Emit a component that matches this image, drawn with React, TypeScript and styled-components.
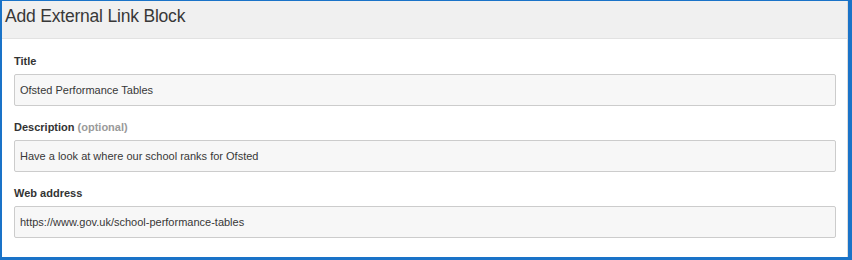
import styled, { createGlobalStyle } from "styled-components";

const GlobalStyle = createGlobalStyle`
  html, body {
    margin: 0;
    padding: 0;
    background: #ffffff;
  }
  body {
    font-family: "Liberation Sans", Arial, sans-serif;
    color: #333333;
  }
`;

const Frame = styled.div`
  width: 852px;
  height: 260px;
  box-sizing: border-box;
  border-style: solid;
  border-color: #1a73c8;
  border-width: 1px 4px 3px 2px;
  background: #ffffff;
  display: flex;
`;

const Panel = styled.div`
  flex: 1;
  display: flex;
  flex-direction: column;
  border-right: 1px solid #dcdcdc;
`;

const Header = styled.div`
  height: 38px;
  box-sizing: border-box;
  background: #f0f0f0;
  border-bottom: 1px solid #e2e2e2;
  padding: 4px 3px 0;
  font-size: 17.5px;
  letter-spacing: -0.2px;
  line-height: 22px;
  color: #383838;
`;

const Body = styled.div`
  padding: 15px 11px 0 12px;
  display: flex;
  flex-direction: column;
  gap: 14px;
`;

const Group = styled.div`
  display: flex;
  flex-direction: column;
`;

const Label = styled.label`
  display: block;
  font-size: 11px;
  line-height: 15px;
  font-weight: bold;
  color: #333333;
  margin-bottom: 5px;
`;

const Hint = styled.span`
  color: #9a9a9a;
`;

const Input = styled.input`
  height: 32px;
  box-sizing: border-box;
  width: 100%;
  margin: 0;
  padding: 0 5px;
  border: 1px solid #cccccc;
  border-radius: 2px;
  background: #f7f7f7;
  font-family: "Liberation Sans", Arial, sans-serif;
  font-size: 11px;
  color: #383838;
  outline: none;
`;

const fields = [
  { label: "Title", optional: false, value: "Ofsted Performance Tables" },
  { label: "Description", optional: true, value: "Have a look at where our school ranks for Ofsted" },
  { label: "Web address", optional: false, value: "https://www.gov.uk/school-performance-tables" },
];

export default function App() {
  return (
    <>
      <GlobalStyle />
      <Frame>
        <Panel>
          <Header>Add External Link Block</Header>
          <Body>
            {fields.map((f) => (
              <Group key={f.label}>
                <Label>
                  {f.label}
                  {f.optional && <Hint> (optional)</Hint>}
                </Label>
                <Input readOnly value={f.value} />
              </Group>
            ))}
          </Body>
        </Panel>
      </Frame>
    </>
  );
}
